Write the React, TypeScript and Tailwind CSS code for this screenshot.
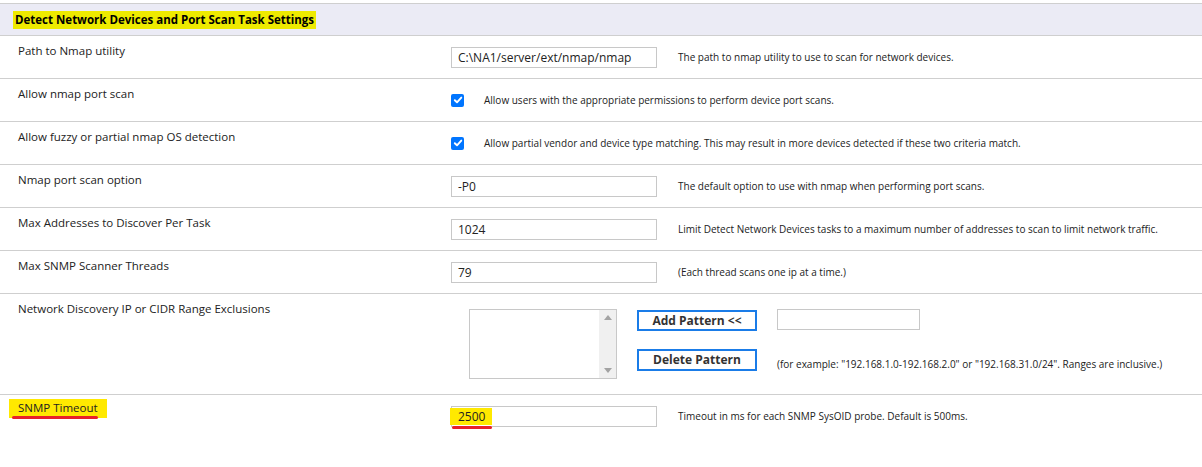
import React from "react";

const font = { fontFamily: '"Open Sans", "Liberation Sans", Arial, sans-serif' };

function Row({ label, control, desc }: { label: React.ReactNode; control: React.ReactNode; desc?: string }) {
  return (
    <div className="flex h-[43px] border-b border-[#cfcfcf]">
      <div className="w-[451px] shrink-0 pl-[18px] pt-[7px] text-[11.5px] leading-[16px] text-[#222]">{label}</div>
      <div className="w-[227px] shrink-0 flex items-center">{control}</div>
      <div className="flex-1 flex items-center text-[10px] text-[#222]">{desc}</div>
    </div>
  );
}

function CheckRow({ label, desc }: { label: string; desc: string }) {
  return (
    <div className="flex h-[43px] border-b border-[#cfcfcf]">
      <div className="w-[451px] shrink-0 pl-[18px] pt-[7px] text-[11.5px] leading-[16px] text-[#222]">{label}</div>
      <div className="flex-1 flex items-center">
        <Check />
        <span className="ml-[20px] text-[10px] text-[#222] whitespace-nowrap">{desc}</span>
      </div>
    </div>
  );
}

function TextBox({ value }: { value: string }) {
  return (
    <div className="w-[206px] h-[21px] border border-[#c8c8c8] bg-white pl-[6px] text-[12px] leading-[19px] text-[#222]">
      {value}
    </div>
  );
}

function Check() {
  return (
    <div className="w-[13px] h-[13px] rounded-[2px] bg-[#0075ff] flex items-center justify-center shrink-0">
      <svg width="10" height="10" viewBox="0 0 10 10">
        <path d="M1.8 5.2 L4 7.3 L8.3 2.6" fill="none" stroke="white" strokeWidth="1.9" strokeLinecap="round" strokeLinejoin="round" />
      </svg>
    </div>
  );
}

export default function App() {
  return (
    <div className="w-[1202px] h-[467px] bg-white overflow-hidden pt-[3px]" style={font}>
      <div className="h-[33px] bg-[#ebebf5] border-t border-b border-[#cfcfcf] flex items-center pl-[13px]">
        <span className="bg-[#eeea00] px-[2px] h-[18px] leading-[18px] text-[11.5px] font-bold text-black">
          Detect Network Devices and Port Scan Task Settings
        </span>
      </div>
      <Row label="Path to Nmap utility" control={<TextBox value="C:\NA1/server/ext/nmap/nmap" />} desc="The path to nmap utility to use to scan for network devices." />
      <CheckRow label="Allow nmap port scan" desc="Allow users with the appropriate permissions to perform device port scans." />
      <CheckRow label="Allow fuzzy or partial nmap OS detection" desc="Allow partial vendor and device type matching. This may result in more devices detected if these two criteria match." />
      <Row label="Nmap port scan option" control={<TextBox value="-P0" />} desc="The default option to use with nmap when performing port scans." />
      <Row label="Max Addresses to Discover Per Task" control={<TextBox value="1024" />} desc="Limit Detect Network Devices tasks to a maximum number of addresses to scan to limit network traffic." />
      <Row label="Max SNMP Scanner Threads" control={<TextBox value="79" />} desc="(Each thread scans one ip at a time.)" />

      <div className="flex h-[101px] border-b border-[#cfcfcf]">
        <div className="w-[451px] shrink-0 pl-[18px] pt-[7px] text-[11.5px] leading-[16px] text-[#222]">
          Network Discovery IP or CIDR Range Exclusions
        </div>
        <div className="flex pt-[15px] pl-[18px]">
          <div className="w-[148px] h-[70px] border border-[#c8c8c8] flex justify-end">
            <div className="w-[17px] h-full bg-[#f0f0f0] flex flex-col justify-between items-center py-[5px]">
              <svg width="8" height="5" viewBox="0 0 8 5"><path d="M0 5 L4 0 L8 5 Z" fill="#a3a3a3" /></svg>
              <svg width="8" height="5" viewBox="0 0 8 5"><path d="M0 0 L4 5 L8 0 Z" fill="#a3a3a3" /></svg>
            </div>
          </div>
          <div className="ml-[20px] flex flex-col gap-[18px] pt-[1px]">
            <button className="w-[120px] h-[21px] border-2 border-[#1a7ce8] bg-white text-[12px] font-bold text-[#333] leading-[17px]">
              Add Pattern &lt;&lt;
            </button>
            <button className="w-[120px] h-[22px] border-2 border-[#1a7ce8] bg-white text-[12px] font-bold text-[#333] leading-[18px]">
              Delete Pattern
            </button>
          </div>
          <div className="ml-[20px] flex flex-col">
            <div className="w-[143px] h-[21px] border border-[#c8c8c8]" />
            <div className="mt-[27px] text-[10px] leading-[14px] text-[#222] whitespace-nowrap">
              (for example: "192.168.1.0-192.168.2.0" or "192.168.31.0/24". Ranges are inclusive.)
            </div>
          </div>
        </div>
      </div>

      <div className="flex h-[43px]">
        <div className="w-[451px] shrink-0 pl-[9px] pt-[4px] text-[11.5px] leading-[16px] text-[#222]">
          <span className="relative inline-block bg-[#ffe900] px-[9px] pt-[1px] pb-[2px]">
            SNMP Timeout
            <span className="absolute left-[3px] right-[9px] bottom-[-1px] h-[3px] rounded-full bg-[#e8202a]" />
          </span>
        </div>
        <div className="w-[227px] shrink-0 flex items-center">
          <div className="relative w-[206px] h-[21px] border border-[#c8c8c8] bg-white text-[12px] leading-[19px] text-[#222]">
            <span className="absolute left-[-2px] top-[1px] h-[17px] w-[42px] bg-[#ffe900] pl-[8px] leading-[17px]">2500</span>
            <span className="absolute left-[0px] top-[19px] h-[3px] w-[40px] rounded-full bg-[#e8202a]" />
          </div>
        </div>
        <div className="flex-1 flex items-center text-[10px] text-[#222]">
          Timeout in ms for each SNMP SysOID probe. Default is 500ms.
        </div>
      </div>
    </div>
  );
}
